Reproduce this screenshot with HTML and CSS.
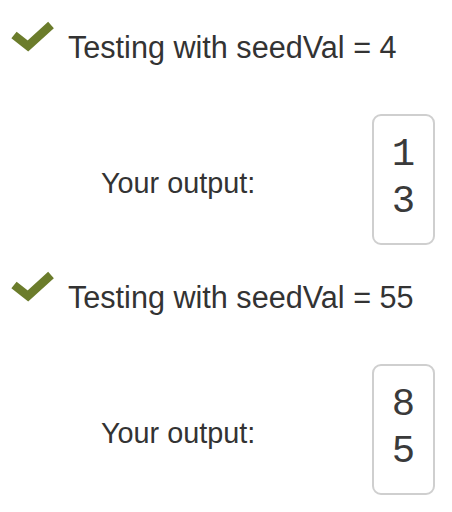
FILE: index.html
```html
<!DOCTYPE html>
<html>
<head>
<meta charset="utf-8">
<link rel="stylesheet" href="styles.css">
</head>
<body>
<div class="test">
  <div class="heading">
    <svg class="check" width="50" height="36" viewBox="0 0 50 36"><polyline points="6,16 20,27 43,6" fill="none" stroke="#6b7c2b" stroke-width="8.5" stroke-linejoin="miter"/></svg>
    <span class="title">Testing with seedVal = 4</span>
  </div>
  <div class="result">
    <span class="label">Your output:</span>
    <div class="output">1<br>3</div>
  </div>
</div>
<div class="test">
  <div class="heading">
    <svg class="check" width="50" height="36" viewBox="0 0 50 36"><polyline points="6,16 20,27 43,6" fill="none" stroke="#6b7c2b" stroke-width="8.5" stroke-linejoin="miter"/></svg>
    <span class="title">Testing with seedVal = 55</span>
  </div>
  <div class="result">
    <span class="label">Your output:</span>
    <div class="output">8<br>5</div>
  </div>
</div>
</body>
</html>
```
FILE: styles.css
```css
html, body {
  margin: 0;
  padding: 0;
  background: #fff;
}
body {
  font-family: "Liberation Sans", Arial, sans-serif;
  color: #333;
}
.test {
  height: 250px;
  padding-top: 29px;
  box-sizing: border-box;
}
.heading {
  display: flex;
  align-items: flex-start;
  padding-left: 8px;
  height: 36px;
}
.check {
  margin-top: -10px;
  flex: none;
}
.title {
  margin-left: 10px;
  font-size: 30.6px;
  line-height: 36px;
  white-space: nowrap;
}
.result {
  display: flex;
  align-items: center;
  margin-top: 49px;
  padding-left: 101px;
}
.label {
  width: 271px;
  font-size: 28.8px;
  padding-top: 7px;
  white-space: nowrap;
}
.output {
  box-sizing: border-box;
  width: 63px;
  height: 131px;
  border: 2px solid #cfcfcf;
  border-radius: 9px;
  font-family: "Liberation Mono", "Courier New", monospace;
  font-size: 39px;
  line-height: 47px;
  text-align: center;
  padding-top: 16px;
  color: #3a3a3a;
}
```
